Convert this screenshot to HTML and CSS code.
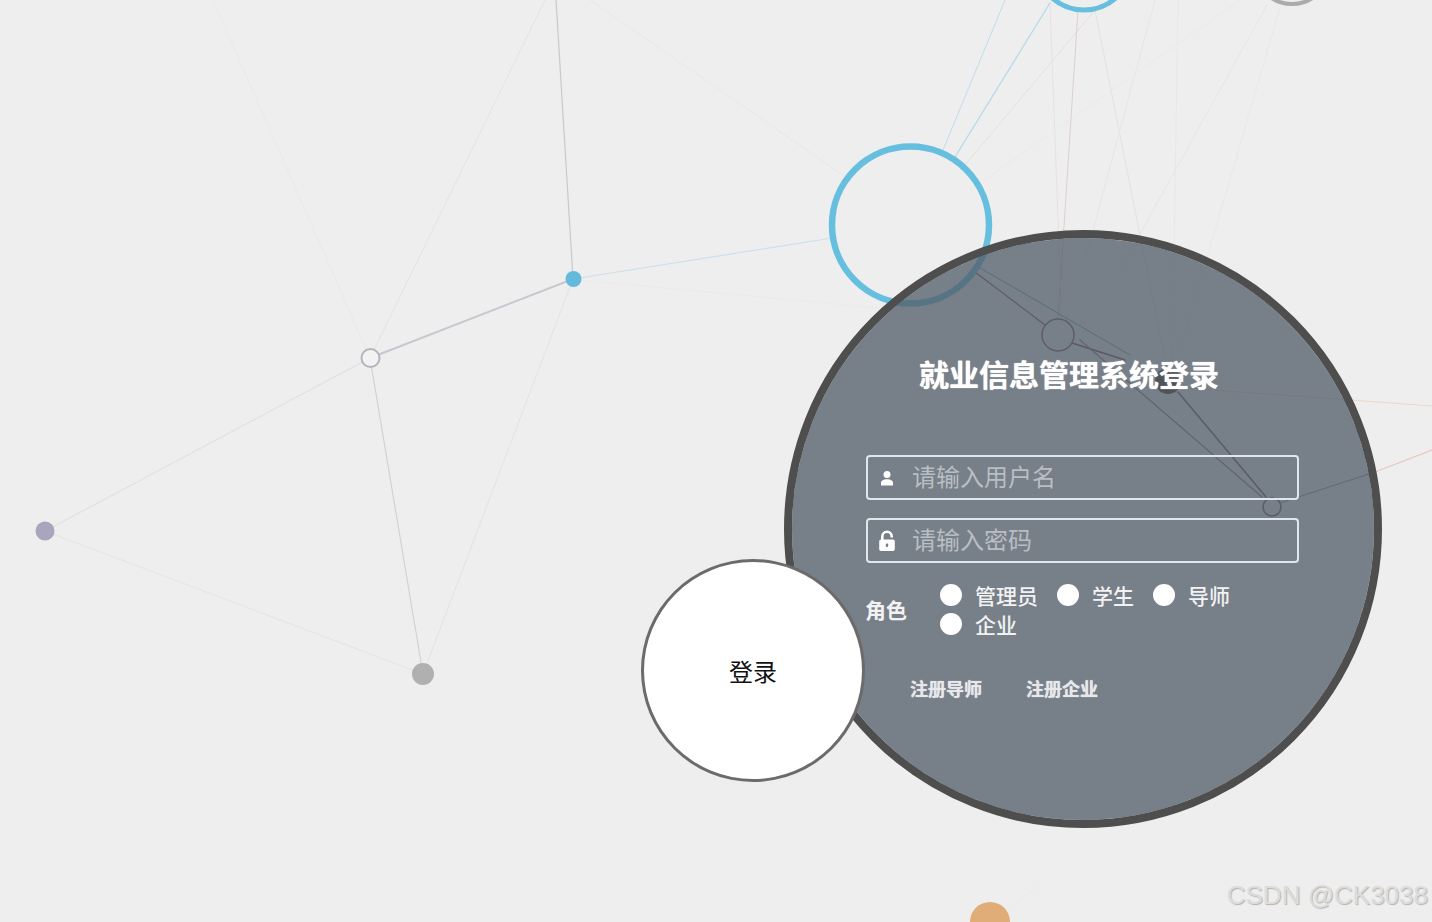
FILE: index.html
```html
<!DOCTYPE html>
<html lang="zh-CN">
<head>
<meta charset="utf-8">
<title>就业信息管理系统登录</title>
<link rel="stylesheet" href="styles.css">
</head>
<body>
<svg class="graph" viewBox="0 0 1432 922" width="1432" height="922" aria-hidden="true">
  <g fill="none" stroke-linecap="round">
    <path d="M370 358L213 0" stroke="#e9e9ea"/>
    <path d="M370 358L545 0" stroke="#e3e3e6"/>
    <path d="M370 358L45 531" stroke="#dedce3"/>
    <path d="M45 531L423 674" stroke="#e4e3e6"/>
    <path d="M573 279L423 674" stroke="#e2e2e6"/>
    <path d="M590 0L850 180" stroke="#e6e9ea"/>
    <path d="M370 358L423 674" stroke="#d2d2d6" stroke-width="1.200"/>
    <path d="M556 0L573 279" stroke="#c9c9cb" stroke-width="1.200"/>
    <path d="M370 358L573 279" stroke="#c6c8d0" stroke-width="2"/>
    <path d="M573 279L832 238" stroke="#cbe0e9" stroke-width="1.200"/>
    <path d="M580 280L900 310" stroke="#ebebeb"/>
    <path d="M943 150L1005 0" stroke="#bddfea"/>
    <path d="M955 157L1050 3" stroke="#b0dae8" stroke-width="1.300"/>
    <path d="M965 165L1095 10" stroke="#e6dfdc"/>
    <path d="M1050 5L1062 325" stroke="#e8e2e2"/>
    <path d="M1095 10L1170 385" stroke="#e8e0e0"/>
    <path d="M1155 0L1085 260" stroke="#e9e5e5"/>
    <path d="M1178 0L1172 385" stroke="#e9e7e7"/>
    <path d="M1240 0L970 190" stroke="#ebe9e9"/>
    <path d="M1267 5L1120 270" stroke="#e8e5e5"/>
    <path d="M1280 8L1180 350" stroke="#ebe6e8"/>
    <path d="M1078 10L1058 320" stroke="#dccfd2"/>
    <path d="M975 272L1045 325" stroke="#8a5a68" stroke-width="1.300"/>
    <path d="M975 265L1130 355" stroke="#6aa2b6"/>
    <path d="M1072 343L1125 360" stroke="#84485c" stroke-width="1.500"/>
    <path d="M1080 340L1262 497" stroke="#8a8288" stroke-width="1.200"/>
    <path d="M1178 392L1266 497" stroke="#6a5a74" stroke-width="1.500"/>
    <path d="M1280 503L1375 472" stroke="#8a90a0"/>
    <path d="M1375 472L1432 450" stroke="#e9c8bc" stroke-width="1.200"/>
    <path d="M1185 388L1432 406" stroke="#ead9cc" stroke-width="1.200"/>
    <path d="M1040 885L990 922" stroke="#ebebeb"/>
    <circle cx="910.500" cy="225" r="78.500" stroke="#66bfde" stroke-width="6.500"/>
    <circle cx="1084" cy="-38" r="48" stroke="#66bfde" stroke-width="5"/>
    <circle cx="1292" cy="-34" r="38" stroke="#ababab" stroke-width="4"/>
    <circle cx="1058" cy="335" r="16" stroke="#8a5e70" stroke-width="1.500"/>
    <circle cx="1272" cy="507" r="9" stroke="#6a5a74" stroke-width="1.500"/>
  </g>
  <circle cx="370.500" cy="358" r="9" fill="#f2f2f2" stroke="#b3b3bb" stroke-width="2"/>
  <circle cx="573.500" cy="279" r="8" fill="#62bbdb"/>
  <circle cx="45" cy="531" r="9.500" fill="#a9a5bf"/>
  <circle cx="423" cy="674" r="11" fill="#b0b0b0"/>
  <circle cx="1168" cy="381" r="13" fill="#4a3a2a"/>
  <circle cx="990" cy="922" r="20" fill="#e0ad78"/>
</svg>

<main class="panel">
  <h1 class="title">就业信息管理系统登录</h1>
  <form class="form">
    <label class="field">
      <svg class="field-icon" viewBox="0 0 20 20" width="20" height="20" aria-hidden="true"><circle cx="10" cy="6.500" r="3.500" fill="#fff"/><path d="M4 17.500v-2.500c0-2.600 2.700-3.800 6-3.800s6 1.200 6 3.800v2.500z" fill="#fff"/></svg>
      <input class="field-input" type="text" placeholder="请输入用户名">
    </label>
    <label class="field">
      <svg class="field-icon" viewBox="0 0 20 24" width="20" height="24" aria-hidden="true"><path d="M5.300 11V7.500a4.700 4.700 0 0 1 9.400 0v1" fill="none" stroke="#fff" stroke-width="2.600"/><path d="M4 10.500h12a1.800 1.800 0 0 1 1.800 1.800v8a1.800 1.800 0 0 1-1.800 1.800H4a1.800 1.800 0 0 1-1.800-1.800v-8A1.800 1.800 0 0 1 4 10.500z" fill="#fff"/><rect x="8.800" y="14.500" width="2.400" height="3.500" rx="1" fill="#78818a"/></svg>
      <input class="field-input" type="password" placeholder="请输入密码">
    </label>
    <div class="roles">
      <span class="roles-label">角色</span>
      <div class="roles-group">
        <label class="role"><input class="role-radio" type="radio" name="role">管理员</label>
        <label class="role"><input class="role-radio" type="radio" name="role">学生</label>
        <label class="role"><input class="role-radio" type="radio" name="role">导师</label>
        <label class="role"><input class="role-radio" type="radio" name="role">企业</label>
      </div>
    </div>
    <nav class="links">
      <a class="link" href="#">注册导师</a>
      <a class="link" href="#">注册企业</a>
    </nav>
  </form>
</main>

<button class="submit" type="button">登录</button>
<div class="mark">CSDN @CK3038</div>
</body>
</html>
```
FILE: styles.css
```css
* { box-sizing: border-box; }
html, body { margin: 0; padding: 0; }
body {
  position: relative;
  width: 1432px;
  height: 922px;
  overflow: hidden;
  background: #eeeeee;
  font-family: "Liberation Sans", "Noto Sans CJK SC", sans-serif;
}
.graph { position: absolute; left: 0; top: 0; display: block; }
.panel {
  position: absolute;
  left: 784px;
  top: 230px;
  width: 598px;
  height: 598px;
  padding: 116px 74px 0;
  border: 8px solid #4e4e4f;
  border-radius: 50%;
  background: rgba(81, 92, 104, 0.76);
  background-clip: padding-box;
}
.title {
  margin: 0 0 57px 53px;
  height: 44px;
  color: #fff;
  font-size: 30px;
  line-height: 44px;
  font-weight: 700;
  white-space: nowrap;
  text-shadow: 0 0 1px #fff;
}
.form { display: flex; flex-direction: column; }
.field {
  display: flex;
  align-items: center;
  width: 433px;
  height: 45px;
  margin-bottom: 18px;
  padding-left: 9px;
  border: 2px solid #dfe6ec;
  border-radius: 4px;
}
.field-icon { flex: none; }
.field-input {
  flex: 1;
  min-width: 0;
  margin: 0 0 4px 15px;
  padding: 0;
  border: 0;
  outline: 0;
  background: transparent;
  color: #fff;
  font: 24px "Noto Sans CJK SC", sans-serif;
}
.field-input::placeholder { color: #b9bec3; opacity: 1; }
.roles { display: flex; align-items: center; color: #f2f2f2; margin: -1px 0 0 -1px; }
.roles-label { width: 75px; font-size: 21px; font-weight: 700; }
.roles-group { display: flex; flex-wrap: wrap; width: 320px; }
.role {
  display: flex;
  align-items: center;
  height: 29px;
  margin-right: 19px;
  font-size: 21px;
  font-weight: 500;
  font-family: "Noto Sans CJK SC", sans-serif;
}
.role-radio {
  appearance: none;
  width: 22px;
  height: 22px;
  margin: 0 13px 0 0;
  border-radius: 50%;
  background: #fff;
}
.links { display: flex; gap: 44px; margin: 39px 0 0 44px; }
.link {
  color: #e6e8ea;
  font-size: 18px;
  line-height: 26px;
  font-weight: 700;
  text-decoration: none;
  text-shadow: 0 0 1px #e6e8ea;
}
.submit {
  position: absolute;
  left: 641px;
  top: 559px;
  width: 224px;
  height: 223px;
  padding: 0;
  border: 3px solid #6d6a6a;
  border-radius: 50%;
  background: #fff;
  color: #111;
  font: 24px "Noto Sans CJK SC", sans-serif;
}
.mark {
  position: absolute;
  right: 4px;
  top: 880px;
  color: #dcdcdc;
  font-size: 26px;
  line-height: 31px;
  white-space: nowrap;
  text-shadow: 1px 1px 1px #b4b4b4;
}
```
